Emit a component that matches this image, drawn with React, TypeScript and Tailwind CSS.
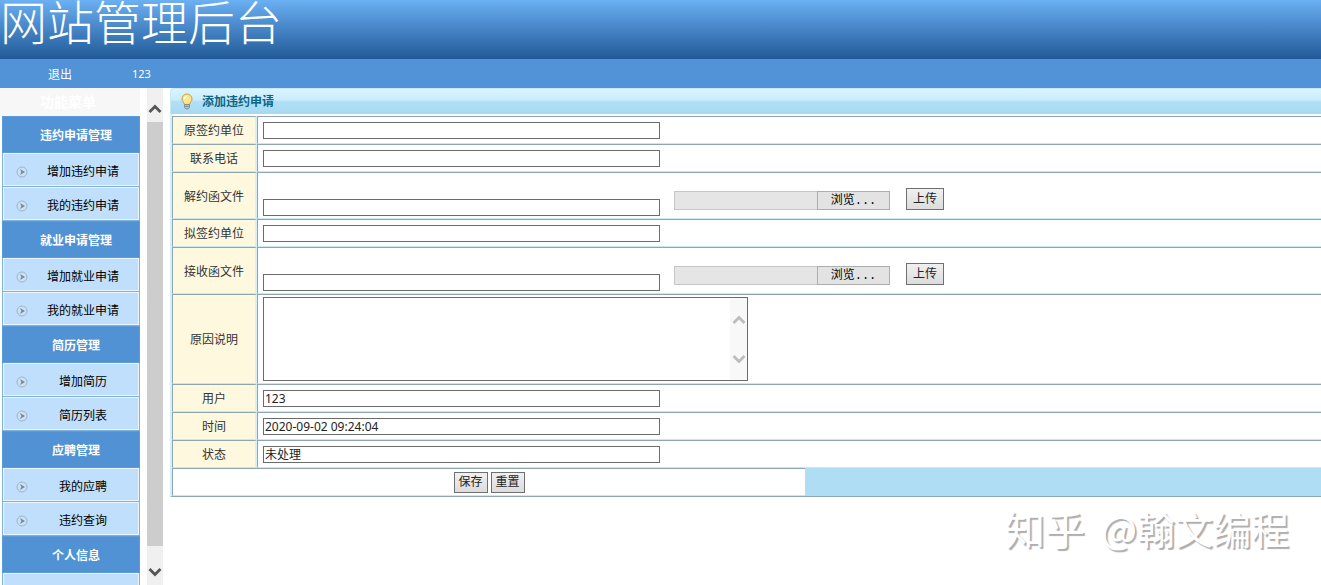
import { useRef } from "react"

const menu = [
    { title: "违约申请管理", items: ["增加违约申请", "我的违约申请"] },
    { title: "就业申请管理", items: ["增加就业申请", "我的就业申请"] },
    { title: "简历管理", items: ["增加简历", "简历列表"] },
    { title: "应聘管理", items: ["我的应聘", "违约查询"] },
    { title: "个人信息", items: [""] },
]

const Chevron = ({ down = false, color }: { down?: boolean; color: string }) => (
    <svg width="14" height="10" viewBox="0 0 14 10" fill="none" stroke={color} strokeWidth="2.8" aria-hidden="true">
        <path d={down ? "M1.5 2 7 7.5 12.5 2" : "M1.5 8 7 2.5 12.5 8"} />
    </svg>
)

const Bullet = () => (
    <svg width="12" height="12" viewBox="0 0 12 12" aria-hidden="true">
        <circle cx="6" cy="6" r="5" fill="#c9e0f5" stroke="#9fb4c8" />
        <path d="M4 3 9 6 4 9 5.4 6z" fill="#76889b" />
    </svg>
)

const Bulb = () => (
    <svg width="14" height="17" viewBox="0 0 14 17" aria-hidden="true">
        <path
            d="M7 1a5 5 0 0 0-5 5c0 2.2 2 3.2 2.4 5.4h5.2C10 9.2 12 8.2 12 6a5 5 0 0 0-5-5z"
            fill="#fbe68a"
            stroke="#c9a03c"
        />
        <path d="M4.5 6a2.5 2.5 0 0 1 2.5-2.5" fill="none" stroke="#fffdf0" strokeWidth="1.6" />
        <path d="M4.5 11.5h5v3l-1.5 1.5h-2l-1.5-1.5z" fill="#b9bec6" stroke="#7d8590" strokeWidth="0.8" />
        <path d="M4.5 13.3h5" stroke="#7d8590" strokeWidth="0.8" />
    </svg>
)

const labelCell = "border-y border-l border-t-[#8da6b0] border-b-[#c9e8f2] border-l-[#8da6b0] border-r-2 border-r-[#d9f0f8] bg-[#fef8df] px-0 pt-0.5 pb-0 text-center font-normal"
const fieldCell = "border-y border-l border-t-[#8da6b0] border-b-[#c9e8f2] border-l-[#7fa9bd] bg-white py-0 pl-[5px] pr-0"
const textBox = "block h-[17px] w-[397px] border border-[#6b6b6b] bg-white px-px text-xs leading-none text-[#222] outline-none"
const greyButton = "border border-[#707070] bg-gradient-to-b from-[#f0f0f0] to-[#dcdcdc] text-center text-xs text-[#222]"

const TextRow = ({ id, label, value = "" }: { id: string; label: string; value?: string }) => (
    <tr className="h-7">
        <th scope="row" className={labelCell}>
            <label htmlFor={id}>{label}</label>
        </th>
        <td colSpan={2} className={fieldCell}>
            <input id={id} type="text" defaultValue={value} className={textBox} />
        </td>
    </tr>
)

const FileRow = ({ id, label }: { id: string; label: string }) => {
    const picker = useRef<HTMLInputElement>(null)

    return (
        <tr className="h-[47px]">
            <th scope="row" className={labelCell}>
                <label htmlFor={id}>{label}</label>
            </th>
            <td colSpan={2} className={`${fieldCell} align-bottom`}>
                <div className="flex items-end pb-0.5">
                    <input id={id} type="text" className={textBox} />
                    <div className="flex pb-1.5">
                        <div className="ml-3.5 mt-[3px] flex h-[19px] w-[216px]">
                            <input
                                type="text"
                                readOnly
                                aria-label={`${label}路径`}
                                className="w-[143px] border border-r-0 border-[#c6c6c6] bg-[#e5e5e5] outline-none"
                            />
                            <button
                                type="button"
                                onClick={() => picker.current?.click()}
                                className="flex-1 border border-[#adadad] bg-[#e3e3e3] font-['Liberation_Mono','Noto_Sans_CJK_SC',monospace] text-xs leading-none text-black"
                            >
                                浏览...
                            </button>
                            <input ref={picker} type="file" className="hidden" aria-label={label} />
                        </div>
                        <button type="button" className={`${greyButton} ml-4 h-[22px] w-[38px] leading-none`}>
                            上传
                        </button>
                    </div>
                </div>
            </td>
        </tr>
    )
}

const Sidebar = () => (
    <nav className="w-[140px] shrink-0 overflow-hidden">
        <div className="h-7 bg-[#f7f7f7] pr-1 text-center text-sm font-bold leading-7 text-white">功能菜单</div>
        <div className="ml-0.5">
            {menu.map((group) => (
                <section key={group.title}>
                    <h2 className="h-[37px] border border-[#5b9bdb] bg-[#5092d4] pl-2.5 text-center text-xs font-bold leading-[37px] text-white">
                        {group.title}
                    </h2>
                    <ul>
                        {group.items.map((item) => (
                            <li key={item} className="h-[34px] border-x border-b border-[#7fb0de]">
                                <a href="#" className="flex h-full items-center border border-[#eaf6ff] bg-[#bfdffc] pt-1 pl-3 text-xs text-black">
                                    {item && <Bullet />}
                                    <span className="flex-1 px-2 text-center">{item}</span>
                                </a>
                            </li>
                        ))}
                    </ul>
                </section>
            ))}
        </div>
    </nav>
)

const App = () => {
    return (
        <div className="flex h-screen flex-col overflow-hidden bg-white font-['Noto_Sans','Noto_Sans_CJK_SC',sans-serif] text-xs text-[#333]">
            <header className="h-[59px] shrink-0 bg-gradient-to-b from-[#6bb0f3] to-[#215a99]">
                <h1 className="font-['Liberation_Sans','Noto_Sans_CJK_SC',sans-serif] text-[47px] font-light leading-[48px] text-white">网站管理后台</h1>
            </header>
            <div className="flex h-[29px] shrink-0 items-center bg-[#5292d6] pt-0.5 pl-12 text-white">
                <a href="#" className="w-[84px]">退出</a>
                <span className="text-[11px]">123</span>
            </div>

            <div className="flex min-h-0 flex-1">
                <Sidebar />
                <div className="ml-[7px] flex w-4 shrink-0 flex-col items-center bg-[#f0f0f0]">
                    <div className="flex h-[34px] items-center pt-2">
                        <Chevron color="#555" />
                    </div>
                    <div className="w-full flex-1 bg-[#cdcdcd]" />
                    <div className="flex h-[39px] items-center pt-3">
                        <Chevron down color="#555" />
                    </div>
                </div>

                <main className="relative ml-[7px] min-w-0 flex-1">
                    <div className="flex h-[26px] items-center gap-2 rounded-tl border-l border-t border-[#c5e9f7] bg-[linear-gradient(#dbf4fe,#c8ecfb_45%,#b0e0f5_50%,#a6daf2)] pl-[9px]">
                        <Bulb />
                        <h2 className="text-xs font-bold text-[#0b6688]">添加违约申请</h2>
                    </div>
                    <form className="border-b border-[#8da6b0] border-l-2 border-l-[#d3eff8] pt-0.5" onSubmit={(e) => e.preventDefault()}>
                        <table className="w-full table-fixed border-separate border-spacing-0 bg-[#aeddf4]">
                            <colgroup>
                                <col className="w-[85px]" />
                                <col className="w-[548px]" />
                                <col />
                            </colgroup>
                            <tbody>
                                <TextRow id="oldUnit" label="原签约单位" />
                                <TextRow id="phone" label="联系电话" />
                                <FileRow id="cancelFile" label="解约函文件" />
                                <TextRow id="newUnit" label="拟签约单位" />
                                <FileRow id="acceptFile" label="接收函文件" />
                                <tr className="h-[90px]">
                                    <th scope="row" className={labelCell}>
                                        <label htmlFor="reason">原因说明</label>
                                    </th>
                                    <td colSpan={2} className={`${fieldCell} align-top`}>
                                        <div className="mt-0.5 flex h-[84px] w-[485px] border border-[#6b6b6b]">
                                            <textarea id="reason" className="min-w-0 flex-1 resize-none overflow-hidden p-0.5 outline-none" />
                                            <div className="flex w-[17px] flex-col items-center justify-center gap-[29px] bg-[#f8f8f8]">
                                                <Chevron color="#bdbdbd" />
                                                <Chevron down color="#bdbdbd" />
                                            </div>
                                        </div>
                                    </td>
                                </tr>
                                <TextRow id="user" label="用户" value="123" />
                                <TextRow id="time" label="时间" value="2020-09-02 09:24:04" />
                                <TextRow id="state" label="状态" value="未处理" />
                                <tr className="h-7">
                                    <td colSpan={2} className="border-y border-l border-t-[#8da6b0] border-b-[#c9e8f2] border-l-[#8da6b0] bg-white p-0">
                                        <div className="flex justify-center gap-[3px]">
                                            <button type="submit" className={`${greyButton} h-[21px] w-[34px] leading-none`}>保存</button>
                                            <button type="reset" className={`${greyButton} h-[21px] w-[34px] leading-none`}>重置</button>
                                        </div>
                                    </td>
                                    <td className="p-0" />
                                </tr>
                            </tbody>
                        </table>
                    </form>
                    <div className="absolute right-8 bottom-8 flex items-center gap-4 whitespace-nowrap font-['Noto_Sans_CJK_SC',sans-serif] text-[38px] leading-[50px] text-white [text-shadow:2px_2px_1px_#adadad]">
                        <span className="text-[40px]">知乎</span>
                        <span>@翰文编程</span>
                    </div>
                </main>
            </div>
        </div>
    )
}

export default App
